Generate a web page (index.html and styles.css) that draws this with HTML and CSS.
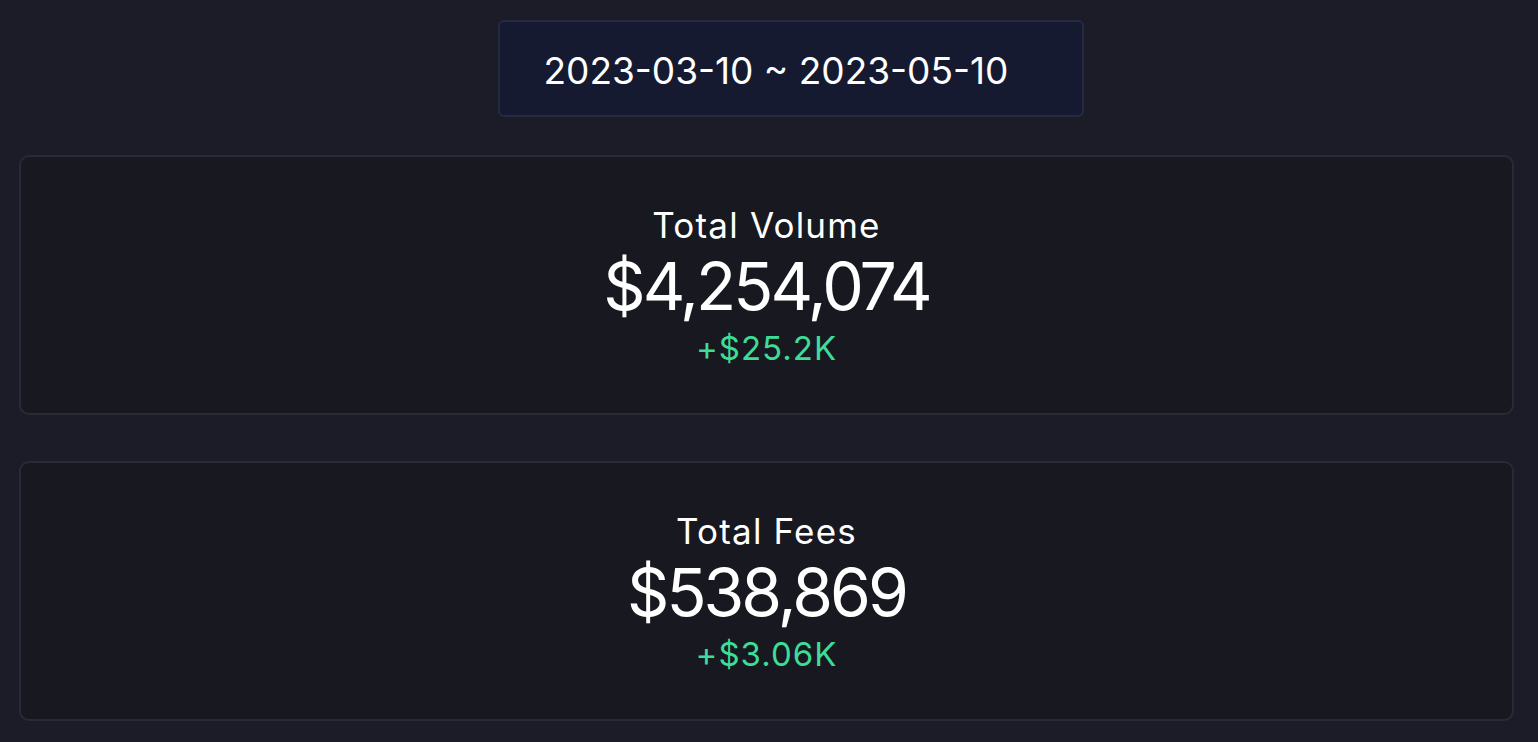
FILE: index.html
```html
<!DOCTYPE html>
<html lang="en">
  <head>
    <meta charset="UTF-8" />
    <meta name="viewport" content="width=device-width, initial-scale=1.0" />
    <title>Stats</title>
    <link rel="stylesheet" href="styles.css">
  </head>
  <body>
    <div class="wrapper">
      <div class="range-box">
        <span class="range-text">2023-03-10 ~ 2023-05-10</span>
      </div>
      <div class="stat-card">
        <div class="stat-title">Total Volume</div>
        <div class="stat-value">$4,254,074</div>
        <div class="stat-change">+$25.2K</div>
      </div>
      <div class="stat-card">
        <div class="stat-title">Total Fees</div>
        <div class="stat-value">$538,869</div>
        <div class="stat-change">+$3.06K</div>
      </div>
    </div>
  </body>
</html>
```

FILE: styles.css
```css
body {
  margin: 0;
  background-color: #1c1c28;
  font-family: Inter, "Noto Sans", sans-serif;
  color: #ffffff;
}
.wrapper {
  display: flex;
  flex-direction: column;
  align-items: center;
  padding: 20px 24px 0 19px;
  gap: 38px;
}
.range-box {
  width: 586px;
  height: 97px;
  margin-left: 48px;
  box-sizing: border-box;
  background-color: #151a30;
  border: 2px solid #262a40;
  border-radius: 6px;
  display: flex;
  align-items: center;
  padding-left: 44px;
  padding-top: 3px;
}
.range-text {
  font-size: 37px;
}
.stat-card {
  width: 100%;
  height: 260px;
  box-sizing: border-box;
  padding-top: 2px;
  background-color: #181820;
  border: 2px solid #292a37;
  border-radius: 10px;
  display: flex;
  flex-direction: column;
  align-items: center;
  justify-content: center;
}
.stat-card + .stat-card {
  margin-top: 8px;
}
.stat-title {
  font-size: 35px;
  line-height: 40px;
  letter-spacing: 1.2px;
}
.stat-value {
  font-size: 66px;
  line-height: 82px;
  letter-spacing: -3px;
}
.stat-change {
  font-size: 33px;
  line-height: 40px;
  letter-spacing: 1px;
  margin-top: 1px;
  color: #3ddc97;
}
```
